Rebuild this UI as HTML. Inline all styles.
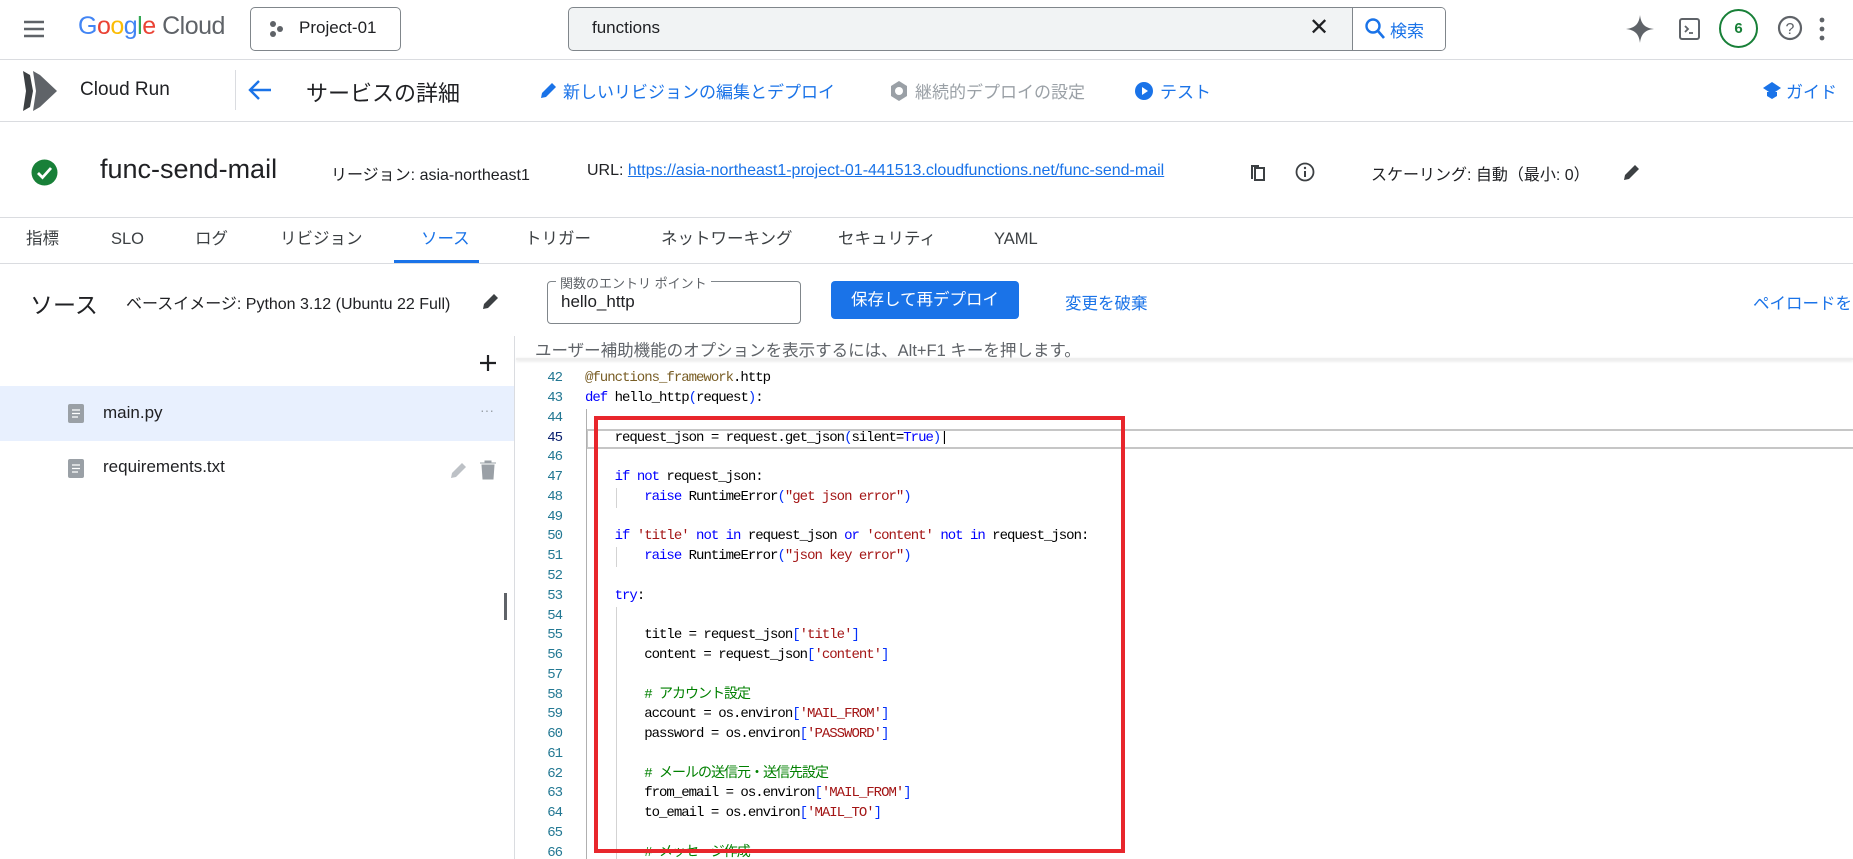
<!DOCTYPE html>
<html><head><meta charset="utf-8">
<style>
*{margin:0;padding:0;box-sizing:border-box}
body{width:1853px;height:859px;overflow:hidden;background:#fff;font-family:"Liberation Sans","Noto Sans CJK JP",sans-serif;color:#202124;position:relative}
.a{position:absolute;white-space:nowrap}
.hl{position:absolute;left:0;right:0;height:1px;background:#dadce0}
.blue{color:#1a73e8}
.code{position:absolute;left:516px;top:359px;width:1337px;height:500px;overflow:hidden;font-family:"Liberation Mono","Noto Sans CJK JP",monospace;font-size:14px;letter-spacing:-1px}
.ln{position:absolute;left:0;width:46px;text-align:right;color:#237893;height:19.8px;line-height:19.8px}
.cl{position:absolute;left:69px;height:19.8px;line-height:19.8px;color:#000;white-space:pre}
.k{color:#0000ff}.s{color:#a31515}.c{color:#008000}.d{color:#795e26}.b{color:#0431fa}
.g{position:absolute;width:1px;background:#d3d3d3}
.tab span{position:absolute;top:0;line-height:22px;height:22px}
</style></head><body>
<!-- top bar -->
<svg class="a" style="left:22px;top:19px" width="24" height="20" viewBox="0 0 24 20"><path d="M2 3h20M2 10h20M2 17h20" stroke="#5f6368" stroke-width="2.4"/></svg>
<div class="a" style="left:78px;top:12px;font-size:25px;letter-spacing:-0.5px"><span style="color:#4285f4">G</span><span style="color:#ea4335">o</span><span style="color:#fbbc04">o</span><span style="color:#4285f4">g</span><span style="color:#34a853">l</span><span style="color:#ea4335">e</span> <span style="color:#5f6368">Cloud</span></div>
<div class="a" style="left:250px;top:7px;width:151px;height:44px;border:1px solid #80868b;border-radius:5px"></div>
<svg class="a" style="left:268px;top:20px" width="18" height="18"><circle cx="5" cy="4" r="3" fill="#5f6368"/><circle cx="12" cy="9" r="3" fill="#5f6368"/><circle cx="5" cy="14" r="3" fill="#5f6368"/></svg>
<div class="a" style="left:299px;top:18px;font-size:17px">Project-01</div>
<div class="a" style="left:568px;top:7px;width:878px;height:44px;border:1px solid #80868b;border-radius:5px;background:#f1f3f4;overflow:hidden"><div style="position:absolute;left:783px;top:0;width:95px;height:44px;background:#fff;border-left:1px solid #80868b"></div></div>
<div class="a" style="left:592px;top:18px;font-size:17px">functions</div>
<div class="a" style="left:1309px;top:13px;font-size:24px;color:#202124">✕</div>
<svg class="a" style="left:1364px;top:17px" width="22" height="24"><circle cx="9" cy="9" r="6.5" stroke="#1a73e8" stroke-width="2.4" fill="none"/><path d="M14 14l6 7" stroke="#1a73e8" stroke-width="2.6"/></svg>
<div class="a blue" style="left:1390px;top:17px;font-size:17px">検索</div>
<svg class="a" style="left:1625px;top:14px" width="30" height="30" viewBox="0 0 30 30"><path d="M15 1C16 10 20 14 29 15C20 16 16 20 15 29C14 20 10 16 1 15C10 14 14 10 15 1Z" fill="#5f6368"/></svg>
<svg class="a" style="left:1678px;top:17px" width="24" height="24"><rect x="2" y="2" width="19" height="20" rx="2" fill="none" stroke="#5f6368" stroke-width="2"/><path d="M7 9l3 3-3 3M11 16h4" stroke="#5f6368" stroke-width="1.8" fill="none"/></svg>
<div class="a" style="left:1719px;top:9px;width:39px;height:39px;border:2px solid #188038;border-radius:50%;text-align:center;line-height:35px;font-size:15px;font-weight:bold;color:#188038">6</div>
<svg class="a" style="left:1776px;top:14px" width="28" height="28"><circle cx="14" cy="14" r="11" stroke="#5f6368" stroke-width="2.2" fill="none"/><text x="14" y="20" text-anchor="middle" font-size="16" fill="#5f6368" font-family="Liberation Sans">?</text></svg>
<svg class="a" style="left:1818px;top:16px" width="8" height="26"><circle cx="4" cy="4" r="2.4" fill="#5f6368"/><circle cx="4" cy="13" r="2.4" fill="#5f6368"/><circle cx="4" cy="22" r="2.4" fill="#5f6368"/></svg>
<div class="hl" style="top:59px"></div>
<!-- second bar -->
<svg class="a" style="left:21px;top:71px" width="38" height="40" viewBox="0 0 38 40"><path d="M2 0L9 4L12 20L9 36L2 40L5 20Z" fill="#3c4043"/><path d="M12 0L19 4L36 20L19 36L12 40L15 20Z" fill="#5f6368"/></svg>
<div class="a" style="left:80px;top:79px;font-size:19px">Cloud Run</div>
<div class="a" style="left:235px;top:70px;width:1px;height:40px;background:#dadce0"></div>
<svg class="a" style="left:247px;top:78px" width="26" height="24"><path d="M24 12H4M12 3L3 12l9 9" stroke="#1a73e8" stroke-width="2.4" fill="none"/></svg>
<div class="a" style="left:306px;top:76px;font-size:22px">サービスの詳細</div>
<svg class="a" style="left:539px;top:80px" width="18" height="20"><path d="M2 18l1-5L13 3l4 4L7 17z" fill="#1a73e8"/></svg>
<div class="a blue" style="left:563px;top:78px;font-size:17px">新しいリビジョンの編集とデプロイ</div>
<svg class="a" style="left:889px;top:80px" width="20" height="22"><path d="M10 1l8 5v10l-8 5-8-5V6z" fill="#9aa0a6"/><circle cx="10" cy="11" r="4" fill="#fff"/></svg>
<div class="a" style="left:915px;top:78px;font-size:17px;color:#9aa0a6">継続的デプロイの設定</div>
<svg class="a" style="left:1134px;top:81px" width="20" height="20"><circle cx="10" cy="10" r="9" fill="#1a73e8"/><path d="M8 6l6 4-6 4z" fill="#fff"/></svg>
<div class="a blue" style="left:1160px;top:78px;font-size:17px">テスト</div>
<svg class="a" style="left:1762px;top:80px" width="20" height="20"><path d="M10 2l9 6-9 6-9-6z" fill="#1a73e8"/><path d="M5 12v4l5 3 5-3v-4" fill="#1a73e8"/></svg>
<div class="a blue" style="left:1786px;top:78px;font-size:17px">ガイド</div>
<div class="hl" style="top:121px"></div>
<!-- header -->
<svg class="a" style="left:31px;top:159px" width="27" height="27"><circle cx="13.5" cy="13.5" r="13" fill="#188038"/><path d="M7 14l4.5 4.5L20 9" stroke="#fff" stroke-width="2.8" fill="none"/></svg>
<div class="a" style="left:100px;top:154px;font-size:27px">func-send-mail</div>
<div class="a" style="left:331px;top:161px;font-size:16px">リージョン: asia-northeast1</div>
<div class="a" style="left:587px;top:161px;font-size:16px;line-height:20px">URL: <span class="blue" style="text-decoration:underline">https://asia-northeast1-project-01-441513.cloudfunctions.net/func-send-mail</span></div>
<svg class="a" style="left:1248px;top:162px" width="18" height="20"><path d="M3 3h8v2H5v12H3z" fill="#3c4043"/><rect x="7" y="6" width="9" height="12" fill="none" stroke="#3c4043" stroke-width="2"/></svg>
<svg class="a" style="left:1295px;top:162px" width="20" height="20"><circle cx="10" cy="10" r="8.5" stroke="#3c4043" stroke-width="1.8" fill="none"/><path d="M10 9v6" stroke="#3c4043" stroke-width="2"/><circle cx="10" cy="6" r="1.2" fill="#3c4043"/></svg>
<div class="a" style="left:1371px;top:161px;font-size:16px">スケーリング: 自動（最小: 0）</div>
<svg class="a" style="left:1622px;top:162px" width="20" height="20"><path d="M2 18l1-5L13 3l4 4L7 17z" fill="#3c4043"/></svg>
<div class="hl" style="top:217px"></div>
<!-- tabs -->
<div class="a tab" style="top:228px;font-size:16.5px;color:#3c4043;left:0;width:1853px;height:22px">
<span style="left:26px">指標</span><span style="left:111px">SLO</span><span style="left:195px">ログ</span><span style="left:280px">リビジョン</span><span class="blue" style="left:421px">ソース</span><span style="left:525px">トリガー</span><span style="left:661px">ネットワーキング</span><span style="left:838px">セキュリティ</span><span style="left:994px">YAML</span></div>
<div class="a" style="left:394px;top:260px;width:85px;height:3px;background:#1a73e8"></div>
<div class="hl" style="top:263px"></div>
<!-- source row -->
<div class="a" style="left:30px;top:286px;font-size:23px">ソース</div>
<div class="a" style="left:126px;top:290px;font-size:16px">ベースイメージ: Python 3.12 (Ubuntu 22 Full)</div>
<svg class="a" style="left:481px;top:291px" width="20" height="20"><path d="M2 18l1-5L13 3l4 4L7 17z" fill="#3c4043"/></svg>
<div class="a" style="left:547px;top:281px;width:254px;height:43px;border:1px solid #80868b;border-radius:4px"></div>
<div class="a" style="left:556px;top:273px;font-size:13px;color:#5f6368;background:#fff;padding:0 4px">関数のエントリ ポイント</div>
<div class="a" style="left:561px;top:292px;font-size:17px">hello_http</div>
<div class="a" style="left:831px;top:281px;width:188px;height:38px;background:#1a73e8;border-radius:4px;color:#fff;font-size:16.5px;text-align:center;line-height:38px">保存して再デプロイ</div>
<div class="a blue" style="left:1065px;top:290px;font-size:16.5px">変更を破棄</div>
<div class="a blue" style="left:1753px;top:290px;font-size:16.5px">ペイロードを</div>
<!-- left panel -->
<svg class="a" style="left:479px;top:354px" width="18" height="18"><path d="M9 1v16M1 9h16" stroke="#202124" stroke-width="2.2"/></svg>
<div class="a" style="left:0;top:386px;width:514px;height:55px;background:#e8f0fe"></div>
<svg class="a" style="left:68px;top:404px" width="16" height="19"><rect width="16" height="19" rx="2" fill="#9aa0a6"/><path d="M4 6h8M4 9.5h8M4 13h6" stroke="#fff" stroke-width="1.3"/></svg>
<div class="a" style="left:103px;top:403px;font-size:17px">main.py</div>
<div class="a" style="left:480px;top:402px;font-size:14px;color:#9aa0a6">···</div>
<svg class="a" style="left:68px;top:459px" width="16" height="19"><rect width="16" height="19" rx="2" fill="#9aa0a6"/><path d="M4 6h8M4 9.5h8M4 13h6" stroke="#fff" stroke-width="1.3"/></svg>
<div class="a" style="left:103px;top:457px;font-size:17px">requirements.txt</div>
<svg class="a" style="left:449px;top:460px" width="20" height="20"><path d="M2 18l1-5L13 3l4 4L7 17z" fill="#bdc1c6"/></svg>
<svg class="a" style="left:479px;top:460px" width="18" height="20"><path d="M1 3h16M6 3V1h6v2M3 5h12l-1 14H4z" fill="#9aa0a6" stroke="#9aa0a6" stroke-width="1"/></svg>
<div class="a" style="left:504px;top:593px;width:3px;height:27px;background:#5f6368"></div>
<div class="a" style="left:514px;top:336px;width:1px;height:523px;background:#dadce0"></div>
<!-- editor -->
<div class="a" style="left:535px;top:337px;font-size:16.5px;color:#5f6368">ユーザー補助機能のオプションを表示するには、Alt+F1 キーを押します。</div>
<div class="a" style="left:516px;top:358px;width:1337px;height:2px;background:#eee;box-shadow:0 1px 3px #ddd"></div>
<div class="code">
<div class="a" style="left:70px;top:70px;right:0;height:19.8px;border:2px solid #c6c6c6;border-right:none"></div>
<div class="g" style="left:70px;top:50px;height:450px;background:#b0b0b0"></div>
<div class="g" style="left:100px;top:129px;height:20px"></div>
<div class="g" style="left:100px;top:188px;height:20px"></div>
<div class="g" style="left:100px;top:248px;height:252px"></div>
<div class="ln" style="top:10px">42</div><div class="cl" style="top:10px"><span class="d">@functions_framework</span>.http</div>
<div class="ln" style="top:30px">43</div><div class="cl" style="top:30px"><span class="k">def</span> hello_http<span class="b">(</span>request<span class="b">)</span>:</div>
<div class="ln" style="top:50px">44</div>
<div class="ln" style="top:70px;color:#0b216f">45</div><div class="cl" style="top:70px">    request_json = request.get_json<span class="b">(</span>silent=<span class="k">True</span><span class="b">)</span>|</div>
<div class="ln" style="top:89px">46</div>
<div class="ln" style="top:109px">47</div><div class="cl" style="top:109px">    <span class="k">if not</span> request_json:</div>
<div class="ln" style="top:129px">48</div><div class="cl" style="top:129px">        <span class="k">raise</span> RuntimeError<span class="b">(</span><span class="s">"get json error"</span><span class="b">)</span></div>
<div class="ln" style="top:149px">49</div>
<div class="ln" style="top:168px">50</div><div class="cl" style="top:168px">    <span class="k">if</span> <span class="s">'title'</span> <span class="k">not in</span> request_json <span class="k">or</span> <span class="s">'content'</span> <span class="k">not in</span> request_json:</div>
<div class="ln" style="top:188px">51</div><div class="cl" style="top:188px">        <span class="k">raise</span> RuntimeError<span class="b">(</span><span class="s">"json key error"</span><span class="b">)</span></div>
<div class="ln" style="top:208px">52</div>
<div class="ln" style="top:228px">53</div><div class="cl" style="top:228px">    <span class="k">try</span>:</div>
<div class="ln" style="top:248px">54</div>
<div class="ln" style="top:267px">55</div><div class="cl" style="top:267px">        title = request_json<span class="b">[</span><span class="s">'title'</span><span class="b">]</span></div>
<div class="ln" style="top:287px">56</div><div class="cl" style="top:287px">        content = request_json<span class="b">[</span><span class="s">'content'</span><span class="b">]</span></div>
<div class="ln" style="top:307px">57</div>
<div class="ln" style="top:327px">58</div><div class="cl c" style="top:327px">        # アカウント設定</div>
<div class="ln" style="top:346px">59</div><div class="cl" style="top:346px">        account = os.environ<span class="b">[</span><span class="s">'MAIL_FROM'</span><span class="b">]</span></div>
<div class="ln" style="top:366px">60</div><div class="cl" style="top:366px">        password = os.environ<span class="b">[</span><span class="s">'PASSWORD'</span><span class="b">]</span></div>
<div class="ln" style="top:386px">61</div>
<div class="ln" style="top:406px">62</div><div class="cl c" style="top:406px">        # メールの送信元・送信先設定</div>
<div class="ln" style="top:425px">63</div><div class="cl" style="top:425px">        from_email = os.environ<span class="b">[</span><span class="s">'MAIL_FROM'</span><span class="b">]</span></div>
<div class="ln" style="top:445px">64</div><div class="cl" style="top:445px">        to_email = os.environ<span class="b">[</span><span class="s">'MAIL_TO'</span><span class="b">]</span></div>
<div class="ln" style="top:465px">65</div>
<div class="ln" style="top:485px">66</div><div class="cl c" style="top:485px">        # メッセージ作成</div>
</div>
<div class="a" style="left:594px;top:416px;width:531px;height:437px;border:4px solid #e8262c"></div>
</body></html>
